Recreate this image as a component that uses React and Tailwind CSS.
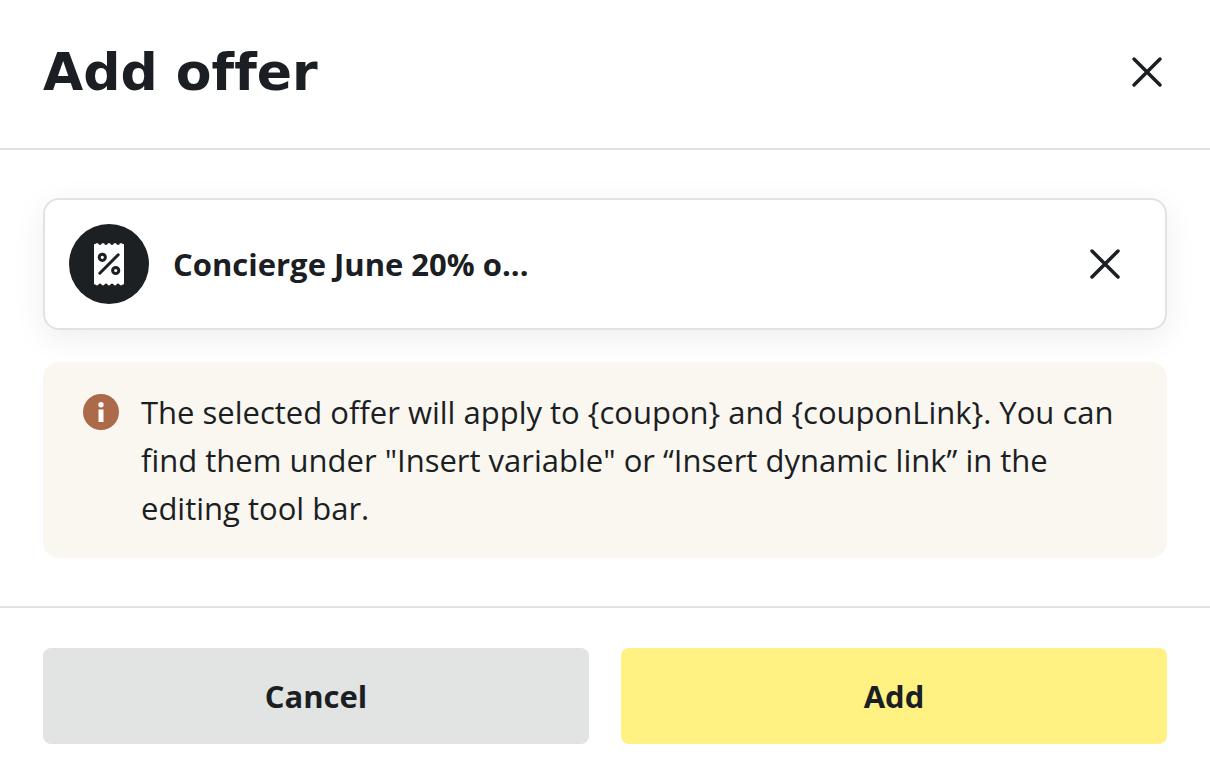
const notice =
  'The selected offer will apply to {coupon} and {couponLink}. You can find them under "Insert variable" or “Insert dynamic link” in the editing tool bar.'

function CrossIcon() {
  return (
    <svg viewBox="0 0 32 32" className="size-8" fill="none" stroke="currentColor" strokeWidth="3.5" strokeLinecap="round">
      <path d="M3 3 29 29M29 3 3 29" />
    </svg>
  )
}

function CouponIcon() {
  return (
    <svg viewBox="0 0 80 80" className="size-20" fill="none">
      <path
        fill="#fff"
        d="M25 20q1.500.5 2-.8h2q.6 1.800 2 1.800t2-1.800h2q.6 1.800 2 1.800t2-1.800h2q.6 1.800 2 1.800t2-1.800h2q.6 1.800 2 1.800t2-1.800h2q.5 1.300 2 .8V60.500q-1.500-.5-2 .8h-2q-.6-1.800-2-1.800t-2 1.800h-2q-.6-1.800-2-1.800t-2 1.800h-2q-.6-1.800-2-1.800t-2 1.800h-2q-.6-1.800-2-1.800t-2 1.800h-2q-.5-1.300-2-.8Z"
      />
      <g stroke="#1d2023" strokeWidth="3" strokeLinecap="round">
        <path d="M49.200 30.800 30.800 49.200" />
        <circle cx="33.300" cy="33.300" r="3.100" />
        <circle cx="46.700" cy="46.500" r="3.100" />
      </g>
    </svg>
  )
}

export default function App() {
  return (
    <main role="dialog" aria-labelledby="dialog-title" className="min-h-screen bg-white font-['Open_Sans',sans-serif] text-[#1b1e23]">
      <header className="flex items-center justify-between border-b-2 border-[#e2e2e2] px-[43px] pt-9 pb-10">
        <h1 id="dialog-title" className="font-['DejaVu_Sans',sans-serif] text-[52px] leading-[72px] font-bold [font-variant-ligatures:none]">Add offer</h1>
        <button type="button" aria-label="Close" className="p-1"><CrossIcon /></button>
      </header>
      <section className="px-[43px] py-12">
        <div className="flex items-center rounded-2xl border-2 border-[#e2e2e2] p-6 shadow-[0_8px_32px_rgba(0,0,0,0.07)]">
          <span className="flex size-20 shrink-0 items-center justify-center rounded-full bg-[#1d2023]"><CouponIcon /></span>
          <p className="ml-6 flex-1 text-[31px] leading-12 font-bold">Concierge June 20% o...</p>
          <button type="button" aria-label="Remove offer" className="mr-4 p-1"><CrossIcon /></button>
        </div>
        <div className="mt-8 flex rounded-2xl bg-[#faf7f0] py-[26px] pr-8 pl-10">
          <svg viewBox="0 0 36 36" className="mt-1.5 mr-[22px] size-9 shrink-0">
            <circle cx="18" cy="18" r="18" fill="#ad6a49" />
            <path fill="#fff" d="M15.500 15.500h5V28h-5z" />
            <circle cx="18" cy="10.700" r="2.700" fill="#fff" />
          </svg>
          <p className="text-[31px] leading-12">{notice}</p>
        </div>
      </section>
      <footer className="grid grid-cols-2 gap-8 border-t-2 border-[#e2e2e2] px-[43px] pt-10 pb-8 text-[31px] font-bold">
        <button type="button" className="h-24 rounded-lg bg-[#e1e4e2]">Cancel</button>
        <button type="button" className="h-24 rounded-lg bg-[#fff182]">Add</button>
      </footer>
    </main>
  )
}
